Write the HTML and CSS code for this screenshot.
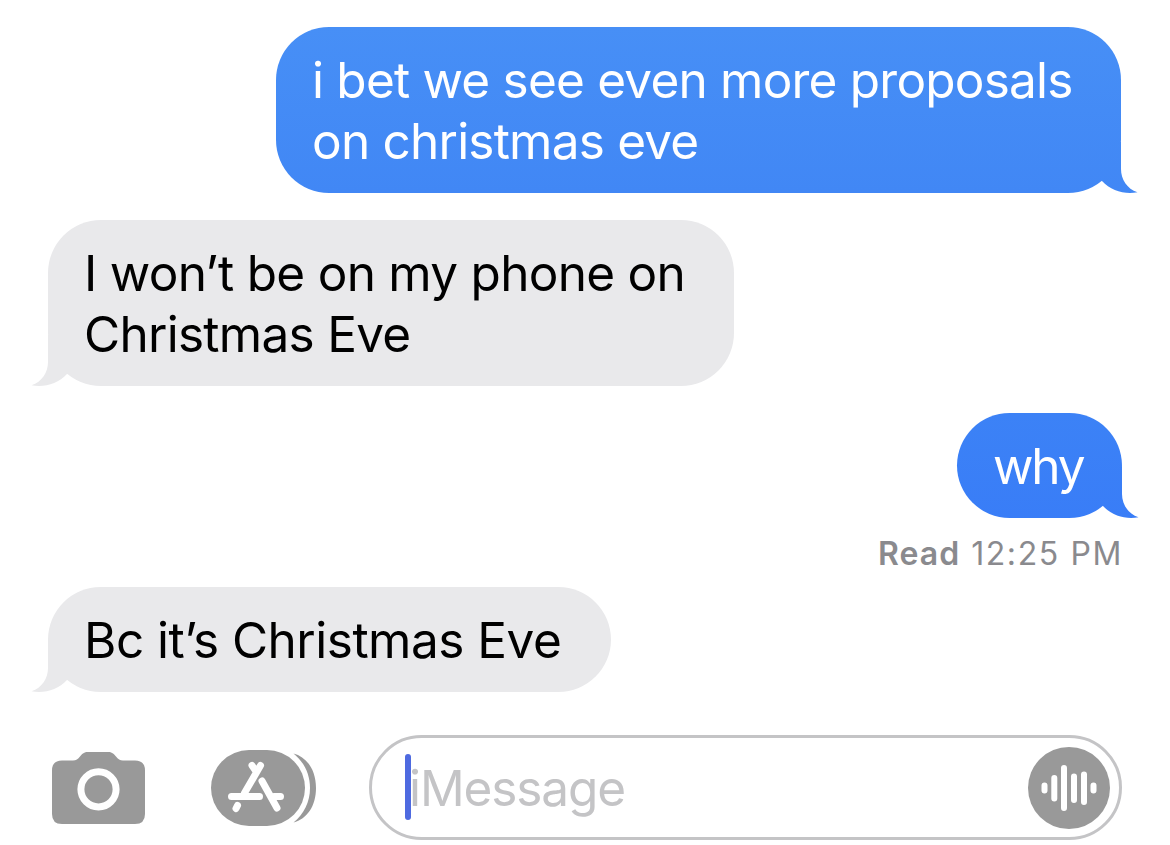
FILE: index.html
```
<!DOCTYPE html>
<html lang="en">
<head>
  <meta charset="UTF-8">
  <meta name="viewport" content="width=device-width, initial-scale=1.0">
  <title>Messages</title>
  <link rel="stylesheet" href="styles.css">
</head>
<body>
  <main class="chat">
    <div class="message sent">
      <p>i bet we see even more proposals</p>
      <p>on christmas eve</p>
      <span class="tail"></span>
    </div>

    <div class="message received">
      <p>I won’t be on my phone on</p>
      <p>Christmas Eve</p>
      <span class="tail"></span>
    </div>

    <div class="message sent latest">
      <p>why</p>
      <span class="tail"></span>
    </div>
    <div class="receipt"><b>Read</b> <span>12:25 PM</span></div>

    <div class="message received short">
      <p>Bc it’s Christmas Eve</p>
      <span class="tail"></span>
    </div>
  </main>

  <footer class="toolbar">
    <svg class="camera" viewBox="0 0 93 72">
      <path fill="#999" d="M10 8.500H21C24 8.500 26 7 28 4.500C30.500 1.500 32 0 36 0H56C60 0 61.500 1.500 64 4.500C66 7 68 8.500 71 8.500H83Q93 8.500 93 18.500V62Q93 72 83 72H10Q0 72 0 62V18.500Q0 8.500 10 8.500Z"/>
      <circle cx="46.500" cy="37.300" r="17.600" fill="none" stroke="#fff" stroke-width="7"/>
    </svg>

    <svg class="apps" viewBox="0 0 106 76">
      <rect width="94" height="76" rx="38" fill="#999"/>
      <path fill="#999" d="M82.500 3.500C96 7 105 20 105 38S96 69 82.500 72.500C93 64 99 52 99 38S93 12 82.500 3.500Z"/>
      <g fill="none" stroke="#fff" stroke-width="7" stroke-linecap="round">
        <path d="M41 15.500L45.500 22M49.500 15.500L33.500 43M20.500 46.500H48.500M63 46.500H69.500M26.500 55.500L25 58.500"/>
        <path d="M51 31L66 58"/>
      </g>
    </svg>

    <div class="field">
      <span class="caret"></span>
      <span class="placeholder">iMessage</span>
      <svg class="audio" viewBox="0 0 82 82">
        <circle cx="41" cy="41" r="41" fill="#999"/>
        <g stroke="#fff" stroke-width="6" stroke-linecap="round">
          <path d="M16.500 38.500V43.500M26.300 31V51.500M36 21V61M46 29.500V53M56 27.500V55M65.500 38.500V43.500"/>
        </g>
      </svg>
    </div>
  </footer>
</body>
</html>
```
FILE: styles.css
```
* {
  box-sizing: border-box;
}

body {
  margin: 0;
  height: 845px;
  overflow: hidden;
  background: #fff;
  font-family: Inter, "Liberation Sans", sans-serif;
}

p {
  margin: 0;
}

.chat {
  display: flex;
  flex-direction: column;
  padding: 27px 48px 0;
}

.message {
  position: relative;
  padding: 23px 36px 21px;
  border-radius: 53px;
  margin-bottom: 27px;
  font-size: 49.5px;
  line-height: 61px;
  letter-spacing: -0.78px;
  white-space: nowrap;
}

.sent {
  align-self: flex-end;
  width: 845px;
  margin-right: 1px;
  background: linear-gradient(#478ff6, #4187f5);
  color: #fff;
}

.received {
  align-self: flex-start;
  width: 686px;
  background: #e9e9eb;
  color: #000;
  letter-spacing: -0.72px;
}

.latest {
  width: 165px;
  margin: 0;
  background: linear-gradient(#3c82f6, #397df7);
  letter-spacing: -2.2px;
}

.short {
  width: 563px;
  margin: 0;
  letter-spacing: -0.5px;
}

.tail {
  position: absolute;
  bottom: 0;
  right: -17px;
  width: 40px;
  height: 60px;
  background: linear-gradient(#478ff6, #4187f5) bottom / 100% 166px;
  clip-path: path("M0 9H23V36C23 46 29 56 39.5 59.2C27 61.5 13 58 4 48L0 44Z");
}

.latest .tail {
  background: linear-gradient(#3c82f6, #397df7) bottom / 100% 105px;
}

.received .tail {
  right: auto;
  left: -17px;
  background: #e9e9eb;
  transform: scaleX(-1);
}

.receipt {
  align-self: flex-end;
  height: 69px;
  margin-right: -1px;
  padding-top: 16px;
  font-size: 32px;
  line-height: 40px;
  letter-spacing: 1px;
  color: #8a8a8e;
  white-space: nowrap;
}

.receipt b {
  margin-right: 1px;
  font-weight: 600;
}

.receipt span {
  letter-spacing: 1.6px;
}

.toolbar {
  display: flex;
  align-items: center;
  margin-top: 43px;
  padding: 0 48px 0 52px;
}

.camera {
  width: 93px;
  height: 72px;
}

.apps {
  width: 106px;
  height: 76px;
  margin-left: 66px;
}

.field {
  display: flex;
  align-items: center;
  width: 753px;
  height: 105px;
  margin-left: 52px;
  padding: 0 9px 0 33px;
  border: 3px solid #c4c4c6;
  border-radius: 53px;
}

.caret {
  width: 6px;
  height: 66px;
  margin-bottom: 2px;
  border-radius: 3px;
  background: #4e6ae0;
}

.placeholder {
  margin-left: -2px;
  padding-top: 2px;
  font-size: 49.5px;
  line-height: 61px;
  letter-spacing: -1.1px;
  color: #c4c4c6;
}

.audio {
  width: 82px;
  height: 82px;
  margin-left: auto;
}
```
